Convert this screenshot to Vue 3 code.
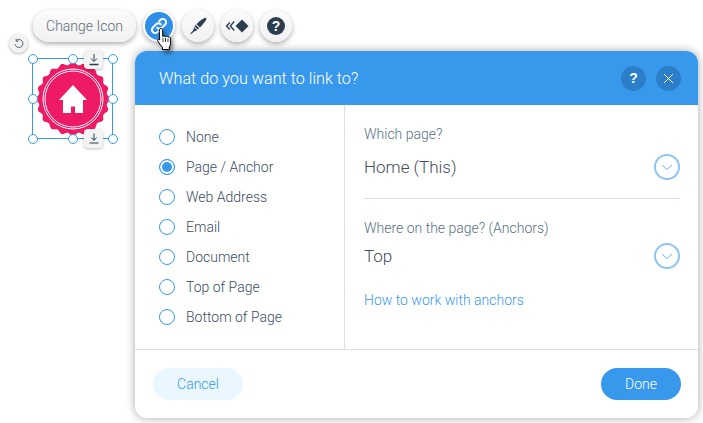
<template>
  <div class="page">
    <div class="toolbar">
      <button class="pill">Change Icon</button>
      <button class="round active">
        <svg width="22" height="22" viewBox="0 0 22 22" fill="none" stroke="#fff" stroke-width="2" stroke-linecap="round">
          <path d="M9.200 12.800a3.300 3.300 0 0 0 4.700 0l3.200-3.200a3.300 3.300 0 0 0-4.700-4.700l-1.200 1.200" />
          <path d="M12.800 9.200a3.300 3.300 0 0 0-4.700 0l-3.200 3.200a3.300 3.300 0 0 0 4.700 4.700l1.200-1.200" />
        </svg>
      </button>
      <button class="round">
        <svg width="20" height="20" viewBox="0 0 20 20" fill="#2b3e50">
          <path d="M18 2c.7.600.3 1.700-.3 2.600-1.500 2.300-3.700 5-5.800 7L8.400 8.200c2-2.200 4.800-4.500 7.100-5.800C16.400 1.900 17.400 1.500 18 2z" />
          <path d="M7.800 8.900l3.400 3.300-1.500 1.300-3.300-3.200z" />
          <path d="M6 11l3 3c-.8 1-2 1.400-3 1.500l-3 2.700-.6-.6 2.700-3c.1-1.200.9-2.700 1.900-3.600z" />
        </svg>
      </button>
      <button class="round">
        <svg width="24" height="16" viewBox="0 0 24 16">
          <path d="M17 1.500L23.500 8 17 14.500 10.500 8z" fill="#2b3e50" />
          <path d="M4.800 4.500L1.600 8l3.200 3.500M9.200 3.500L5.300 8l3.900 4.500" fill="none" stroke="#2b3e50" stroke-width="1.400" />
        </svg>
      </button>
      <button class="round">
        <span class="help-dark">?</span>
      </button>
    </div>

    <div class="undo">
      <svg width="12" height="12" viewBox="0 0 12 12" fill="none" stroke="#5a6875" stroke-width="1">
        <path d="M3 2.800a4 4 0 1 1-1 3.400" />
        <path d="M3.200 .8v2.400h2.400" />
      </svg>
    </div>

    <!-- selected element on the canvas -->
    <div class="selection">
      <svg class="badge-art" width="74" height="74" viewBox="0 0 74 74">
        <path :d="badgePath" fill="#ef1a66" />
        <circle cx="37" cy="37" r="30" fill="none" stroke="#fff" stroke-width="1" />
        <circle cx="37" cy="37" r="28" fill="none" stroke="#fff" stroke-width="1" />
        <path d="M37 23L51 38h-4v13h-8v-6.500h-4V51h-8V38h-4z" fill="#fff" />
      </svg>
      <span v-for="h in handles" :key="h" :class="['handle', h]"></span>
      <span class="tag tag-top">
        <svg width="12" height="13" viewBox="0 0 12 13" fill="none" stroke="#2b3e50" stroke-width="1">
          <path d="M6 1v7M3 5.500L6 8.500l3-3" />
          <path d="M1.500 11.500h9" stroke-width="1.500" />
        </svg>
      </span>
      <span class="tag tag-bottom">
        <svg width="12" height="13" viewBox="0 0 12 13" fill="none" stroke="#2b3e50" stroke-width="1">
          <path d="M6 1.500v6.500M3.500 5.500L6 8.500l2.500-3" />
          <path d="M1.500 11h9" />
        </svg>
      </span>
    </div>

    <div class="dialog">
      <div class="dialog-head">
        <h1>What do you want to link to?</h1>
        <div class="head-btns">
          <span class="head-btn">?</span>
          <span class="head-btn">
            <svg width="11" height="11" viewBox="0 0 11 11" stroke="#fff" stroke-width="1">
              <path d="M1 1l9 9M10 1l-9 9" />
            </svg>
          </span>
        </div>
      </div>

      <div class="dialog-body">
        <ul class="options">
          <li v-for="opt in options" :key="opt" @click="selected = opt">
            <span :class="['radio', { on: selected === opt }]"></span>
            {{ opt }}
          </li>
        </ul>
        <div class="fields">
          <div class="field first">
            <label>Which page?</label>
            <div class="select">
              <span>Home (This)</span>
              <span class="chevron">
                <svg width="12" height="7" viewBox="0 0 12 7" fill="none" stroke="#6cb4f2" stroke-width="1">
                  <path d="M1 1l5 4.500L11 1" />
                </svg>
              </span>
            </div>
          </div>
          <div class="field">
            <label>Where on the page? (Anchors)</label>
            <div class="select second">
              <span>Top</span>
              <span class="chevron">
                <svg width="12" height="7" viewBox="0 0 12 7" fill="none" stroke="#6cb4f2" stroke-width="1">
                  <path d="M1 1l5 4.500L11 1" />
                </svg>
              </span>
            </div>
            <a class="howto">How to work with anchors</a>
          </div>
        </div>
      </div>

      <div class="dialog-foot">
        <button class="btn cancel">Cancel</button>
        <button class="btn done">Done</button>
      </div>
    </div>

    <!-- mouse pointer -->
    <svg class="cursor" width="20" height="26" viewBox="0 0 20 26">
      <path d="M6 1.500c1 0 1.700.7 1.700 1.700v6.300c.3-.8 2.300-.9 2.700.2.500-.7 2.200-.7 2.600.4.700-.5 2.300-.2 2.500 1v5.400c0 1.500-.6 2.600-1.200 3.500v2.500H7.500v-2.200c-1.500-1.500-3.500-4.300-4.800-6.300-.6-1 .7-2.400 2-1.200l-.4-8.600C4.300 2.200 5 1.500 6 1.500z" fill="#fff" stroke="#000" stroke-width="1" />
      <path d="M8 11v4M10.500 11v4M13 11.500v3.500" stroke="#000" stroke-width=".8" />
    </svg>
  </div>
</template>

<script setup>
import { ref } from 'vue'

const options = ['None', 'Page / Anchor', 'Web Address', 'Email', 'Document', 'Top of Page', 'Bottom of Page']
const selected = ref('Page / Anchor')
const handles = ['tl', 'tc', 'tr', 'ml', 'mr', 'bl', 'bc', 'br']

// scalloped edge of the badge
function makeBadge() {
  const pts = []
  const n = 240
  for (let i = 0; i <= n; i++) {
    const a = (i / n) * Math.PI * 2
    const r = 35.5 + 1.3 * Math.cos(a * 20)
    pts.push((37 + r * Math.sin(a)).toFixed(2) + ' ' + (37 - r * Math.cos(a)).toFixed(2))
  }
  return 'M' + pts.join('L') + 'Z'
}
const badgePath = makeBadge()
</script>

<style>
html, body {
  margin: 0;
  background: #fff;
}
</style>

<style scoped>
.page {
  position: relative;
  width: 703px;
  height: 423px;
  overflow: hidden;
  background: #fff;
  font-family: "Roboto", "Liberation Sans", sans-serif;
  font-weight: 300;
  color: #3b4d5f;
}

button {
  font-family: inherit;
  font-weight: inherit;
  border: none;
  padding: 0;
}

.toolbar {
  display: flex;
  align-items: center;
  gap: 7px;
  padding: 9px 0 0 33px;
  height: 33px;
}

.pill {
  width: 103px;
  height: 32px;
  border-radius: 16px;
  background: linear-gradient(#fbfbfb, #f1f1f1);
  box-shadow: 0 2px 5px rgba(0, 0, 0, 0.32);
  font-size: 14px;
  color: #5f6d79;
}

.round {
  width: 32px;
  height: 32px;
  border-radius: 50%;
  background: linear-gradient(#fbfbfb, #f1f1f1);
  box-shadow: 0 2px 5px rgba(0, 0, 0, 0.32);
  display: flex;
  align-items: center;
  justify-content: center;
}

.round.active {
  background: #2f8fe8;
  border: 2px solid #fff;
  box-sizing: border-box;
}

.help-dark {
  width: 18px;
  height: 18px;
  border-radius: 50%;
  background: #2b3e50;
  color: #fff;
  font: bold 14px/18px "Liberation Sans", sans-serif;
  text-align: center;
}

.undo {
  position: absolute;
  left: 9px;
  top: 34px;
  width: 19px;
  height: 19px;
  border-radius: 50%;
  background: #f2f2f2;
  box-shadow: 0 1px 3px rgba(0, 0, 0, 0.3);
  display: flex;
  align-items: center;
  justify-content: center;
}

.selection {
  position: absolute;
  left: 32px;
  top: 58px;
  width: 81px;
  height: 81px;
  box-sizing: border-box;
  border: 1px solid #3899ec;
}

.badge-art {
  position: absolute;
  left: 3px;
  top: 2.500px;
}

.handle {
  position: absolute;
  width: 10px;
  height: 10px;
  box-sizing: border-box;
  border: 1px solid #3899ec;
  border-radius: 50%;
  background: #fff;
}

.handle.tl { left: -5px; top: -5px; }
.handle.tc { left: 35px; top: -5px; }
.handle.tr { left: 75px; top: -5px; }
.handle.ml { left: -5px; top: 35px; }
.handle.mr { left: 75px; top: 35px; }
.handle.bl { left: -5px; top: 75px; }
.handle.bc { left: 35px; top: 75px; }
.handle.br { left: 75px; top: 75px; }

.tag {
  position: absolute;
  left: 51px;
  width: 19px;
  height: 19px;
  border-radius: 4px;
  background: #f3f3f3;
  box-shadow: 0 1px 3px rgba(0, 0, 0, 0.25);
  display: flex;
  align-items: center;
  justify-content: center;
}

.tag-top { top: -9px; }
.tag-bottom { top: 70px; }

.dialog {
  position: absolute;
  left: 135px;
  top: 51px;
  width: 563px;
  height: 367px;
  display: flex;
  flex-direction: column;
  border-radius: 12px;
  background: #fff;
  box-shadow: 0 0 10px rgba(0, 0, 0, 0.35);
  overflow: hidden;
}

.dialog-head {
  height: 54px;
  flex: none;
  display: flex;
  align-items: center;
  justify-content: space-between;
  padding: 0 17px 0 24px;
  background: #3899ec;
  color: #fff;
}

.dialog-head h1 {
  margin: 0;
  font-size: 16.200px;
  font-weight: 300;
}

.head-btns {
  display: flex;
  gap: 10px;
}

.head-btn {
  width: 25px;
  height: 25px;
  border-radius: 50%;
  background: #2b7fc8;
  display: flex;
  align-items: center;
  justify-content: center;
  font: bold 14px "Liberation Sans", sans-serif;
}

.dialog-body {
  flex: 1;
  display: flex;
  border-bottom: 1px solid #d6e1e8;
}

.options {
  width: 210px;
  box-sizing: border-box;
  flex: none;
  margin: 0;
  padding: 17px 0 0 24px;
  list-style: none;
  border-right: 1px solid #d6e1e8;
}

.options li {
  height: 30px;
  display: flex;
  align-items: center;
  gap: 11px;
  font-size: 14px;
}

.radio {
  width: 16px;
  height: 16px;
  box-sizing: border-box;
  border: 1px solid #3899ec;
  border-radius: 50%;
}

.radio.on {
  background: #3899ec;
  box-shadow: inset 0 0 0 2px #fff;
}

.fields {
  flex: 1;
  padding: 0 18px 0 19px;
}

.field {
  padding-top: 20px;
}

.field.first {
  height: 73px;
  border-bottom: 1px solid #d6e1e8;
}

.field label {
  display: block;
  font-size: 14px;
  line-height: 18px;
  color: #577086;
}

.select {
  display: flex;
  align-items: center;
  justify-content: space-between;
  height: 26px;
  margin-top: 11px;
  font-size: 17px;
  color: #3f4d5a;
}

.select.second {
  margin-top: 6px;
}

.chevron {
  width: 26px;
  height: 26px;
  box-sizing: border-box;
  border: 2px solid #8ec5f6;
  border-radius: 50%;
  display: flex;
  align-items: center;
  justify-content: center;
}

.howto {
  display: block;
  margin-top: 23px;
  font-size: 14px;
  color: #3899ec;
}

.dialog-foot {
  height: 68px;
  flex: none;
  display: flex;
  align-items: center;
  justify-content: space-between;
  padding: 0 17px 0 18px;
}

.btn {
  height: 32px;
  border-radius: 16px;
  font-size: 14px;
}

.cancel {
  width: 90px;
  background: #eaf7ff;
  color: #3899ec;
}

.done {
  width: 80px;
  background: #3899ec;
  color: #fff;
}

.cursor {
  position: absolute;
  left: 155px;
  top: 27px;
  filter: drop-shadow(2px 3px 2px rgba(0, 0, 0, 0.5));
}
</style>
